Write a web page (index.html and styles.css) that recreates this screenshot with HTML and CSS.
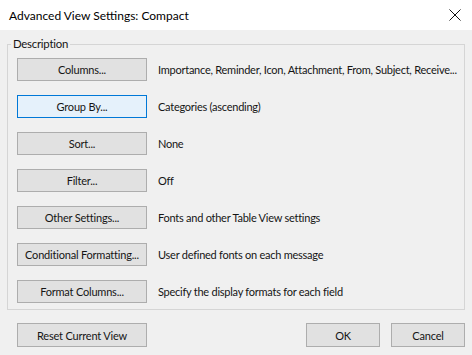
FILE: index.html
```html
<!DOCTYPE html>
<html lang="en">
  <head>
    <meta charset="UTF-8" />
    <meta name="viewport" content="width=device-width, initial-scale=1.0" />
    <title>Advanced View Settings: Compact</title>
    <link rel="stylesheet" href="styles.css">
  </head>
  <body>
    <div class="dialog">
      <div class="titlebar">
        <span class="title">Advanced View Settings: Compact</span>
        <svg class="close" width="12" height="12" viewBox="0 0 12 12">
          <path d="M0.5 0.5 L11.5 11.5 M11.5 0.5 L0.5 11.5" stroke="#111" stroke-width="1" fill="none" />
        </svg>
      </div>

      <div class="content">
        <fieldset class="group">
          <legend>Description</legend>
          <div class="row">
            <button>Columns...</button>
            <span class="desc">Importance, Reminder, Icon, Attachment, From, Subject, Receive...</span>
          </div>
          <div class="row">
            <button class="focused">Group By...</button>
            <span class="desc">Categories (ascending)</span>
          </div>
          <div class="row">
            <button>Sort...</button>
            <span class="desc">None</span>
          </div>
          <div class="row">
            <button>Filter...</button>
            <span class="desc">Off</span>
          </div>
          <div class="row">
            <button>Other Settings...</button>
            <span class="desc">Fonts and other Table View settings</span>
          </div>
          <div class="row">
            <button>Conditional Formatting...</button>
            <span class="desc">User defined fonts on each message</span>
          </div>
          <div class="row">
            <button>Format Columns...</button>
            <span class="desc">Specify the display formats for each field</span>
          </div>
        </fieldset>

        <div class="footer">
          <button class="reset">Reset Current View</button>
          <div class="actions">
            <button class="small">OK</button>
            <button class="small">Cancel</button>
          </div>
        </div>
      </div>
    </div>
  </body>
</html>
```

FILE: styles.css
```css
body {
  margin: 0;
  font-family: Lato, "Noto Sans", Arial, sans-serif;
  font-size: 11px;
  letter-spacing: -0.25px;
  color: #151515;
  background: #f0f0f0;
}
.dialog {
  width: 472px;
  height: 355px;
  background: #f0f0f0;
  overflow: hidden;
}
.titlebar {
  height: 30px;
  background: #fff;
  display: flex;
  align-items: center;
  justify-content: space-between;
  padding: 0 11px 0 9px;
  box-sizing: border-box;
}
.title {
  font-size: 12px;
  letter-spacing: 0;
  color: #000;
}
.content {
  padding: 0 7px;
}
.group {
  margin: 6px 0 0;
  padding: 6px 9px 0;
  border: 1px solid #d5d5d5;
  width: 458px;
  min-width: 0;
  height: 274px;
  box-sizing: border-box;
}
.group legend {
  padding: 0 2px;
  margin-left: -6px;
  line-height: 16px;
  font-size: 11.4px;
}
.row {
  display: flex;
  align-items: center;
  gap: 11px;
  margin-bottom: 14px;
}
button {
  font-family: inherit;
  font-size: 11px;
  letter-spacing: -0.2px;
  color: #151515;
  background: #e1e1e1;
  border: 1px solid #adadad;
  height: 23px;
  width: 130px;
  flex: none;
  padding: 0;
  margin: 0;
  white-space: nowrap;
}
button.focused {
  background: #e5f1fb;
  border-color: #0078d7;
}
.desc {
  white-space: nowrap;
}
.footer {
  display: flex;
  justify-content: space-between;
  margin-top: 13px;
  padding-left: 10px;
}
.footer button {
  height: 24px;
}
.actions {
  display: flex;
  gap: 11px;
}
button.small {
  width: 74px;
}
```
